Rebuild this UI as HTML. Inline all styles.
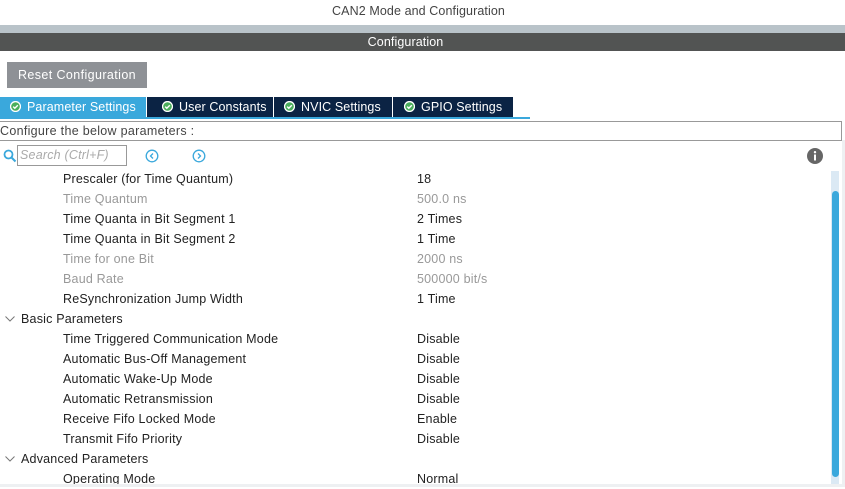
<!DOCTYPE html>
<html><head><meta charset="utf-8"><style>
*{box-sizing:border-box;margin:0;padding:0}
body{width:845px;height:487px;overflow:hidden;background:#fff;font-family:"Liberation Sans",sans-serif;font-size:12px;color:#222;position:relative}
.abs{position:absolute}
.title{left:0;right:0;top:4px;text-align:center;font-size:12.5px;color:#444;padding-right:8px;letter-spacing:0.1px}
.gbar{left:0;top:25px;width:845px;height:8px;background:#b9c3c9}
.dbar{left:0;top:33px;width:845px;height:18px;background:#525453;color:#fff;text-align:center;line-height:18px;font-size:12.5px;padding-right:34px;letter-spacing:0.1px}
.btn{left:7px;top:62px;width:140px;height:26px;background:#8e9196;color:#fff;text-align:center;line-height:26px;font-size:12.5px;letter-spacing:0.4px}
.tab{top:97px;height:20px;line-height:20px;color:#fff;font-size:12.5px;background:#0b2344;padding-left:10px;letter-spacing:0.1px}
.tab.act{background:#3aa8dc}
.chk{display:inline-block;width:11px;height:11px;border-radius:50%;background:#fff;vertical-align:-1px;margin-right:6px;position:relative}
.chk svg{position:absolute;left:0;top:0}
.bline{left:0;top:117px;width:845px;height:2px;background:#3aa8dc}
.cfg{left:0;top:121px;width:842px;height:20px;border:1px solid #999;border-left:none;line-height:18px;color:#444;font-size:12.5px;letter-spacing:0.3px}
.search{left:17px;top:145px;width:110px;height:21px;border:1px solid #999;color:#aaa;font-style:italic;line-height:19px;padding-left:2px;font-size:12.5px;letter-spacing:0.2px}
.row{left:0;height:20px;line-height:20px;font-size:12.5px;width:830px;letter-spacing:0.2px}
.row .n{position:absolute;left:63px}
.row .v{position:absolute;left:417px}
.row.g{color:#999}
.row.h .n{left:21px}
.track{left:831px;top:171px;width:8px;height:313px;background:#dbe9f4}
.thumb{left:832px;top:191px;width:7px;height:286px;background:#3aa8dc;border-radius:4px}
</style></head><body>
<div class="abs title">CAN2 Mode and Configuration</div>
<div class="abs gbar"></div>
<div class="abs dbar">Configuration</div>
<div class="abs btn">Reset Configuration</div>
<div class="abs tab act" style="left:0;width:146px">
<span class="chk"><svg width="11" height="11"><circle cx="5.5" cy="5.5" r="5.5" fill="#fff"/><circle cx="5.5" cy="5.5" r="4.3" fill="#4aae5c"/><path d="M3.2 5.6l1.6 1.6 3-3" stroke="#fff" stroke-width="1.4" fill="none"/></svg></span>Parameter Settings</div>
<div class="abs tab" style="left:147px;width:126px;padding-left:15px">
<span class="chk"><svg width="11" height="11"><circle cx="5.5" cy="5.5" r="5.5" fill="#fff"/><circle cx="5.5" cy="5.5" r="4.3" fill="#4aae5c"/><path d="M3.2 5.6l1.6 1.6 3-3" stroke="#fff" stroke-width="1.4" fill="none"/></svg></span>User Constants</div>
<div class="abs tab" style="left:274px;width:118px;padding-left:10px">
<span class="chk"><svg width="11" height="11"><circle cx="5.5" cy="5.5" r="5.5" fill="#fff"/><circle cx="5.5" cy="5.5" r="4.3" fill="#4aae5c"/><path d="M3.2 5.6l1.6 1.6 3-3" stroke="#fff" stroke-width="1.4" fill="none"/></svg></span>NVIC Settings</div>
<div class="abs tab" style="left:393px;width:120px;padding-left:11px">
<span class="chk"><svg width="11" height="11"><circle cx="5.5" cy="5.5" r="5.5" fill="#fff"/><circle cx="5.5" cy="5.5" r="4.3" fill="#4aae5c"/><path d="M3.2 5.6l1.6 1.6 3-3" stroke="#fff" stroke-width="1.4" fill="none"/></svg></span>GPIO Settings</div>
<div class="abs bline" style="width:530px"></div>
<div class="abs cfg">Configure the below parameters :</div>
<svg class="abs" style="left:3px;top:149px" width="14" height="14"><circle cx="5.5" cy="5.5" r="4" stroke="#3aa8dc" stroke-width="1.8" fill="none"/><path d="M8.5 8.5l4 4" stroke="#3aa8dc" stroke-width="2"/></svg>
<div class="abs search">Search (Ctrl+F)</div>
<svg class="abs" style="left:145px;top:149px" width="14" height="14"><circle cx="7" cy="7" r="5.8" stroke="#3aa8dc" stroke-width="1.3" fill="none"/><path d="M8 4.5L5.5 7 8 9.5" stroke="#3aa8dc" stroke-width="1.3" fill="none"/></svg>
<svg class="abs" style="left:192px;top:149px" width="14" height="14"><circle cx="7" cy="7" r="5.8" stroke="#3aa8dc" stroke-width="1.3" fill="none"/><path d="M6 4.5L8.5 7 6 9.5" stroke="#3aa8dc" stroke-width="1.3" fill="none"/></svg>
<svg class="abs" style="left:807px;top:148px" width="16" height="16"><circle cx="8" cy="8" r="8" fill="#666"/><rect x="7" y="6.5" width="2" height="6" fill="#fff"/><circle cx="8" cy="4.2" r="1.2" fill="#fff"/></svg>

<div class="abs row" style="top:169px"><span class="n">Prescaler (for Time Quantum)</span><span class="v">18</span></div>
<div class="abs row g" style="top:189px"><span class="n">Time Quantum</span><span class="v">500.0 ns</span></div>
<div class="abs row" style="top:209px"><span class="n">Time Quanta in Bit Segment 1</span><span class="v">2 Times</span></div>
<div class="abs row" style="top:229px"><span class="n">Time Quanta in Bit Segment 2</span><span class="v">1 Time</span></div>
<div class="abs row g" style="top:249px"><span class="n">Time for one Bit</span><span class="v">2000 ns</span></div>
<div class="abs row g" style="top:269px"><span class="n">Baud Rate</span><span class="v">500000 bit/s</span></div>
<div class="abs row" style="top:289px"><span class="n">ReSynchronization Jump Width</span><span class="v">1 Time</span></div>
<div class="abs row h" style="top:309px"><svg style="position:absolute;left:5px;top:7px" width="10" height="6"><path d="M0.5 0.5L5 5 9.5 0.5" stroke="#777" fill="none"/></svg><span class="n">Basic Parameters</span></div>
<div class="abs row" style="top:329px"><span class="n">Time Triggered Communication Mode</span><span class="v">Disable</span></div>
<div class="abs row" style="top:349px"><span class="n">Automatic Bus-Off Management</span><span class="v">Disable</span></div>
<div class="abs row" style="top:369px"><span class="n">Automatic Wake-Up Mode</span><span class="v">Disable</span></div>
<div class="abs row" style="top:389px"><span class="n">Automatic Retransmission</span><span class="v">Disable</span></div>
<div class="abs row" style="top:409px"><span class="n">Receive Fifo Locked Mode</span><span class="v">Enable</span></div>
<div class="abs row" style="top:429px"><span class="n">Transmit Fifo Priority</span><span class="v">Disable</span></div>
<div class="abs row h" style="top:449px"><svg style="position:absolute;left:5px;top:7px" width="10" height="6"><path d="M0.5 0.5L5 5 9.5 0.5" stroke="#777" fill="none"/></svg><span class="n">Advanced Parameters</span></div>
<div class="abs row" style="top:469px"><span class="n">Operating Mode</span><span class="v">Normal</span></div>
<div class="abs track"></div>
<div class="abs thumb"></div>
<div class="abs" style="left:0;top:484px;width:845px;height:3px;background:#eef0f2"></div>
<div class="abs" style="left:842px;top:140px;width:3px;height:347px;background:#eef0f2"></div>
</body></html>
